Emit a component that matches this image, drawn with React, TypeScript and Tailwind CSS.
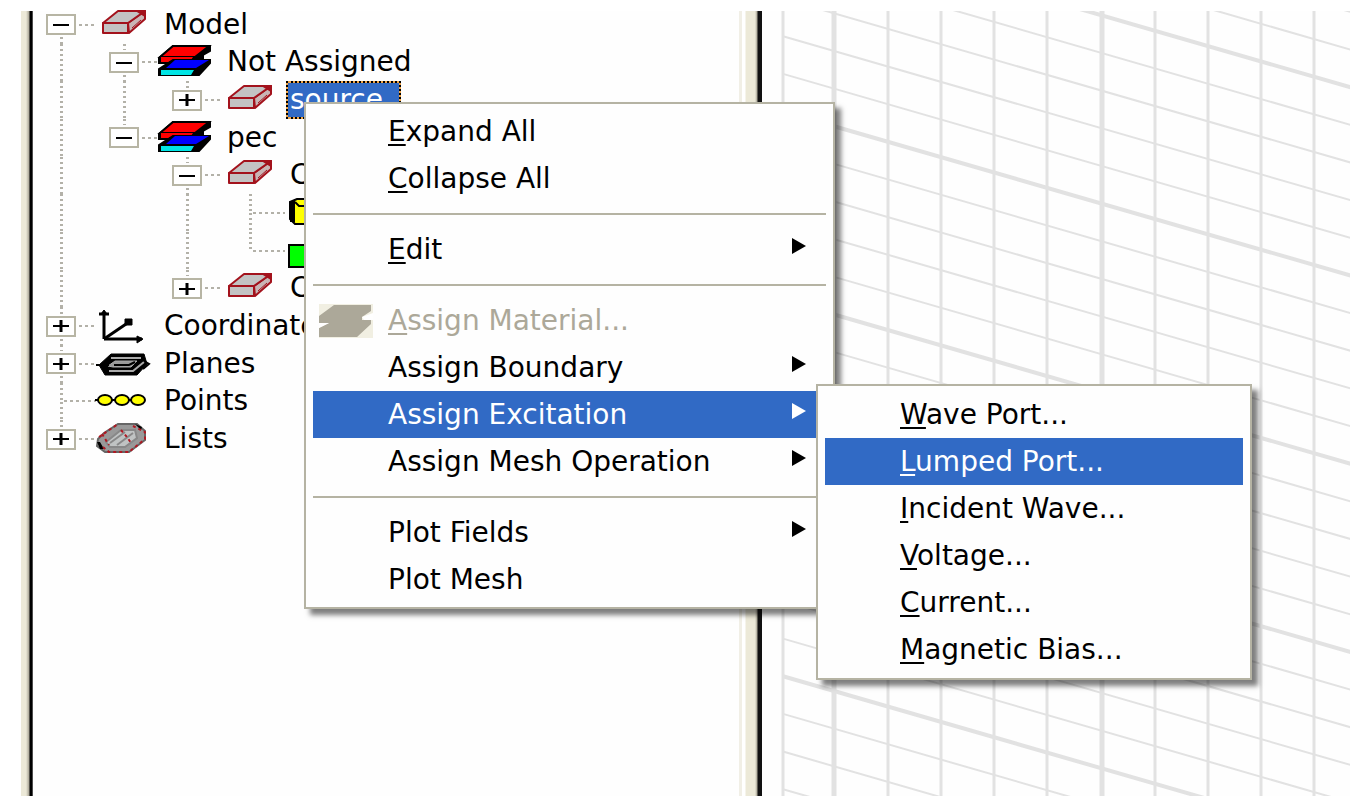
import type { ReactNode } from "react";

type IconName =
  | "solid"
  | "material"
  | "cylinder"
  | "sheet"
  | "axes"
  | "planes"
  | "points"
  | "lists";

type TreeRow = {
  label: string;
  icon: IconName;
  // one entry per parent level, true when that level's line passes this row
  trunk: boolean[];
  toggle?: "+" | "-";
  up?: boolean;
  down?: boolean;
  selected?: boolean;
};

type MenuEntry = {
  label?: string;
  hotkey?: boolean;
  submenu?: boolean;
  disabled?: boolean;
  active?: boolean;
  icon?: boolean;
};

const rows: TreeRow[] = [
  { label: "Model", icon: "solid", trunk: [], toggle: "-", down: true },
  { label: "Not Assigned", icon: "material", trunk: [true], toggle: "-", up: true, down: true },
  { label: "source", icon: "solid", trunk: [true, true], toggle: "+", up: true, selected: true },
  { label: "pec", icon: "material", trunk: [true], toggle: "-", up: true },
  { label: "C", icon: "solid", trunk: [true, false], toggle: "-", up: true, down: true },
  { label: "", icon: "cylinder", trunk: [true, false, true], up: true, down: true },
  { label: "", icon: "sheet", trunk: [true, false, true], up: true },
  { label: "C", icon: "solid", trunk: [true, false], toggle: "+", up: true },
  { label: "Coordinates", icon: "axes", trunk: [], toggle: "+", up: true, down: true },
  { label: "Planes", icon: "planes", trunk: [], toggle: "+", up: true, down: true },
  { label: "Points", icon: "points", trunk: [], up: true, down: true },
  { label: "Lists", icon: "lists", trunk: [], toggle: "+", up: true },
];

const mainMenu: MenuEntry[] = [
  { label: "Expand All", hotkey: true },
  { label: "Collapse All", hotkey: true },
  {},
  { label: "Edit", hotkey: true, submenu: true },
  {},
  { label: "Assign Material...", hotkey: true, disabled: true, icon: true },
  { label: "Assign Boundary", submenu: true },
  { label: "Assign Excitation", submenu: true, active: true },
  { label: "Assign Mesh Operation", submenu: true },
  {},
  { label: "Plot Fields", submenu: true },
  { label: "Plot Mesh" },
];

const excitationMenu: MenuEntry[] = [
  { label: "Wave Port...", hotkey: true },
  { label: "Lumped Port...", hotkey: true, active: true },
  { label: "Incident Wave...", hotkey: true },
  { label: "Voltage...", hotkey: true },
  { label: "Current...", hotkey: true },
  { label: "Magnetic Bias...", hotkey: true },
];

const glyphs: Record<IconName, ReactNode> = {
  solid: (
    <g stroke="#a3121c" strokeWidth="2" strokeLinejoin="round">
      <path d="M27 14 44 2V10L28 24Z" fill="#c9b5b5" />
      <path d="M2 14 17 2H44L27 14Z" fill="#c3c3c3" />
      <path d="M2 14H27V24H2Z" fill="#c3c3c3" />
      <path d="M36 2H44V7Z" fill="#a3121c" />
      <path d="M31 19 40 11" strokeWidth="1" />
    </g>
  ),
  material: (
    <g stroke="#000" strokeWidth="2">
      <path d="M-5 12 9 0H46V5L39 9V14L30 17H-5Z" fill="#000" />
      <path d="M-4 11 9 0H45L31 11Z" fill="#f00" />
      <path d="M-3 11H29L27 14H9L5 16H-3Z" fill="#f00" stroke="none" />
      <path d="M-5 23 9 14H46V17L35 29H-5Z" fill="#000" />
      <path d="M2 22 11 14H45L32 22Z" fill="#00f" stroke="none" />
      <path d="M-3 24H30L27 29H-3Z" fill="#00e5e5" stroke="none" />
    </g>
  ),
  cylinder: (
    <g stroke="#000" strokeWidth="2">
      <path d="M0 5V22L5 27H26L31 22V5L26 2H7Z" fill="#ff0" />
      <path d="M1 5H4V24H1Z" fill="#000" />
      <path d="M5 5 9 9H24L29 5" fill="none" />
    </g>
  ),
  sheet: <path d="M-1 10H40V32H-1Z" fill="#0f0" stroke="#000" strokeWidth="2" />,
  axes: (
    <g fill="none" stroke="#000">
      <path d="M3 29V2M-2 4H8M3 29H41" strokeWidth="3" />
      <path d="M3 29 28 12" strokeWidth="3" />
      <path d="M24 9H31V15H24ZM36 26 42 29 36 33ZM0 4 3 0 6 4Z" fill="#000" strokeWidth="1" />
    </g>
  ),
  planes: (
    <g fill="none" stroke="#000" strokeWidth="3">
      <path d="M-2 17 10 6H43L46 16 36 27H4Z" fill="#000" strokeWidth="1" />
      <path d="M10 10H40M8 23H32L43 14" stroke="#aaa" strokeWidth="2" />
      <path d="M7 18 14 13H36L30 19H12Z" fill="#999" stroke="#aaa" strokeWidth="1" />
      <path d="M13 17H28L34 14" strokeWidth="2" />
      <path d="M-5 17H8M43 13 48 16 42 21" strokeWidth="2" />
    </g>
  ),
  points: (
    <g fill="#ff0" stroke="#000" strokeWidth="2">
      <path d="M-6 15H44" />
      <ellipse cx="4" cy="15" rx="7" ry="5" />
      <ellipse cx="21" cy="15" rx="7" ry="5" />
      <ellipse cx="37" cy="15" rx="7" ry="5" />
    </g>
  ),
  lists: (
    <g strokeWidth="2">
      <path d="M-3 16 3 10 17 1H36L44 8V17L28 29H4L-4 23Z" fill="#999" stroke="#666" />
      <path d="M-4 19H-1L3 26H-1ZM34 1 41 4 40 7Z" fill="#000" />
      <path d="M5 19 20 7H34L36 15 24 24H9Z" fill="#c0c3c3" stroke="#888" />
      <path d="M9 20 24 9M16 22 32 10" stroke="#888" fill="none" />
      <path
        d="M-2 14 17 1M32 3 44 9V16L28 29M2 24 8 29H28M1 11 8 22M20 7 26 14 30 20"
        fill="none"
        stroke="#b01822"
        strokeDasharray="3 3"
      />
    </g>
  ),
};

const Icon = ({ name }: { name: IconName }) => (
  <svg viewBox="0 0 48 32" className="h-8 w-12 shrink-0 overflow-visible" aria-hidden="true">
    {glyphs[name]}
  </svg>
);

const DottedV = ({ show }: { show?: boolean }) => (
  <span
    className={
      show
        ? "w-[3px] flex-1 bg-[repeating-linear-gradient(to_bottom,#b3b1a8_0_2px,transparent_2px_5px)]"
        : "w-[3px] flex-1"
    }
  />
);

const dottedH = "h-[2px] bg-[repeating-linear-gradient(to_right,#b3b1a8_0_3px,transparent_3px_6px)]";

const TreeItem = ({ row }: { row: TreeRow }) => (
  <li className="flex items-stretch whitespace-nowrap">
    {row.trunk.map((show, i) => (
      <span key={i} className="flex w-[63px] shrink-0">
        <span className="flex w-[30px] flex-col items-center">
          <DottedV show={show} />
        </span>
      </span>
    ))}
    <span className="flex w-[55px] shrink-0 items-center">
      <span className="flex w-[30px] shrink-0 flex-col items-center self-stretch">
        <DottedV show={row.up} />
        {row.toggle && (
          <button
            type="button"
            aria-label={`${row.toggle === "+" ? "Expand" : "Collapse"} ${row.label}`}
            className="my-[2px] flex h-[21px] w-[30px] shrink-0 items-center justify-center border-2 border-[#b7b5a4] bg-white"
          >
            <svg viewBox="0 0 18 12" className="h-3 w-[18px]" aria-hidden="true">
              <path d="M1 6H17" stroke="#000" strokeWidth="2" />
              {row.toggle === "+" && <path d="M9 0V12" stroke="#000" strokeWidth="3" />}
            </svg>
          </button>
        )}
        <DottedV show={row.down} />
      </span>
      {row.toggle ? (
        <span className={`${dottedH} ml-[3px] w-4`} />
      ) : (
        <span className={`${dottedH} -ml-3 w-8 shrink-0`} />
      )}
    </span>
    <span className="flex w-[63px] shrink-0 items-center">
      <Icon name={row.icon} />
    </span>
    {row.selected ? (
      <span className="-ml-1 flex bg-[#f0a548]">
        <span className="flex items-center border-2 border-dotted border-black bg-[#316ac5] bg-clip-padding pr-4 pl-[2px] text-white">
          {row.label}
        </span>
      </span>
    ) : (
      <span className="flex items-center">{row.label}</span>
    )}
  </li>
);

const ContextMenu = ({ items, label }: { items: MenuEntry[]; label: string }) => (
  <div role="menu" aria-label={label} className="flex flex-col">
    {items.map((item, i) => {
      if (!item.label) {
        return (
          <div key={i} role="separator" className="flex h-6 items-center">
            <span className="h-[2px] flex-1 bg-[#b5b3a3]" />
          </div>
        );
      }
      const tone = item.active
        ? "bg-[#316ac5] text-white"
        : item.disabled
          ? "text-[#aca899]"
          : "text-black";
      return (
        <button
          key={i}
          type="button"
          role="menuitem"
          disabled={item.disabled}
          className={`flex h-[47px] w-full items-center whitespace-nowrap pr-5 text-left ${tone}`}
        >
          <span className="flex w-[75px] shrink-0 pl-[6px]">
            {item.icon && (
              <svg viewBox="0 0 54 34" className="h-[34px] w-[54px]" aria-hidden="true">
                <path d="M0 0H54V34H0Z" fill="#f1efe2" />
                <path d="M0 12 15 1H52V7L43 13V16H52V20L38 33H0V24L10 19H0Z" fill="#aca899" />
                <path d="M0 19H10L0 24ZM43 13 54 9V16H45Z" fill="#fff" />
              </svg>
            )}
          </span>
          <span className="flex-1">
            {item.hotkey ? (
              <>
                <span className="underline decoration-2 underline-offset-[3px]">{item.label[0]}</span>
                {item.label.slice(1)}
              </>
            ) : (
              item.label
            )}
          </span>
          {item.submenu && (
            <svg viewBox="0 0 14 16" className="mb-2 h-4 w-[14px]" aria-hidden="true">
              <path d="M0 0 14 8 0 16Z" fill="currentColor" />
            </svg>
          )}
        </button>
      );
    })}
  </div>
);

const verticals = [21, 72, 126, 179, 232, 285, 340, 393, 446, 499, 552, 605, 659, 712];

const ModelGrid = () => (
  <svg className="h-full w-full" stroke="#e2e2e2" aria-hidden="true">
    {verticals.map((x, i) => (
      <line key={x} x1={x} x2={x} y1="0" y2="100%" strokeWidth={i % 5 === 1 ? 5 : 3} />
    ))}
    {Array.from({ length: 60 }, (_, i) => {
      // every fifth line is a major one
      const y = -276 + i * 37.65;
      return (
        <line
          key={i}
          x1="21"
          y1={y}
          x2="2021"
          y2={y + 578}
          strokeWidth={i % 5 === 0 ? 4 : 2}
        />
      );
    })}
  </svg>
);

const App = () => {
  return (
    <div className="relative flex h-screen overflow-hidden bg-white pt-[11px] pb-[6px] font-['DejaVu_Sans',sans-serif] text-[28px] leading-7 text-black">
      {/* Project tree */}
      <aside className="flex w-[762px] shrink-0 pl-[21px]">
        <div className="w-3 shrink-0 bg-[linear-gradient(to_right,#ece9d8_0_5px,#aca899_8px,#000_9px_11px,#999_12px)]" />
        <nav aria-label="Model tree" className="min-w-0 flex-1 bg-[#fefefe] pl-[13px]">
          <ul className="-mt-[5px] grid h-[452px] auto-rows-fr">
            {rows.map((row, i) => (
              <TreeItem key={i} row={row} />
            ))}
          </ul>
        </nav>
        <div className="w-[23px] shrink-0 bg-[linear-gradient(to_right,#f1efe6_0_3px,#fff_3px_6px,#ece9d8_7px_16px,#aca899_18px,#111_19px_23px)]" />
      </aside>

      {/* Modeler window */}
      <main className="min-w-0 flex-1 overflow-hidden bg-[#fefefe]">
        <ModelGrid />
      </main>

      <div className="absolute top-[102px] left-[304px] w-[531px] border-2 border-[#b5b3a3] bg-[#fefefe] px-[7px] py-1 shadow-[6px_6px_5px_0px_rgba(0,0,0,0.5)]">
        <ContextMenu items={mainMenu} label="Object" />
      </div>
      <div className="absolute top-[384px] left-[816px] w-[436px] border-2 border-[#b5b3a3] bg-[#fefefe] px-[7px] py-[5px] shadow-[6px_6px_5px_0px_rgba(0,0,0,0.5)]">
        <ContextMenu items={excitationMenu} label="Assign Excitation" />
      </div>
    </div>
  );
};

export default App;
